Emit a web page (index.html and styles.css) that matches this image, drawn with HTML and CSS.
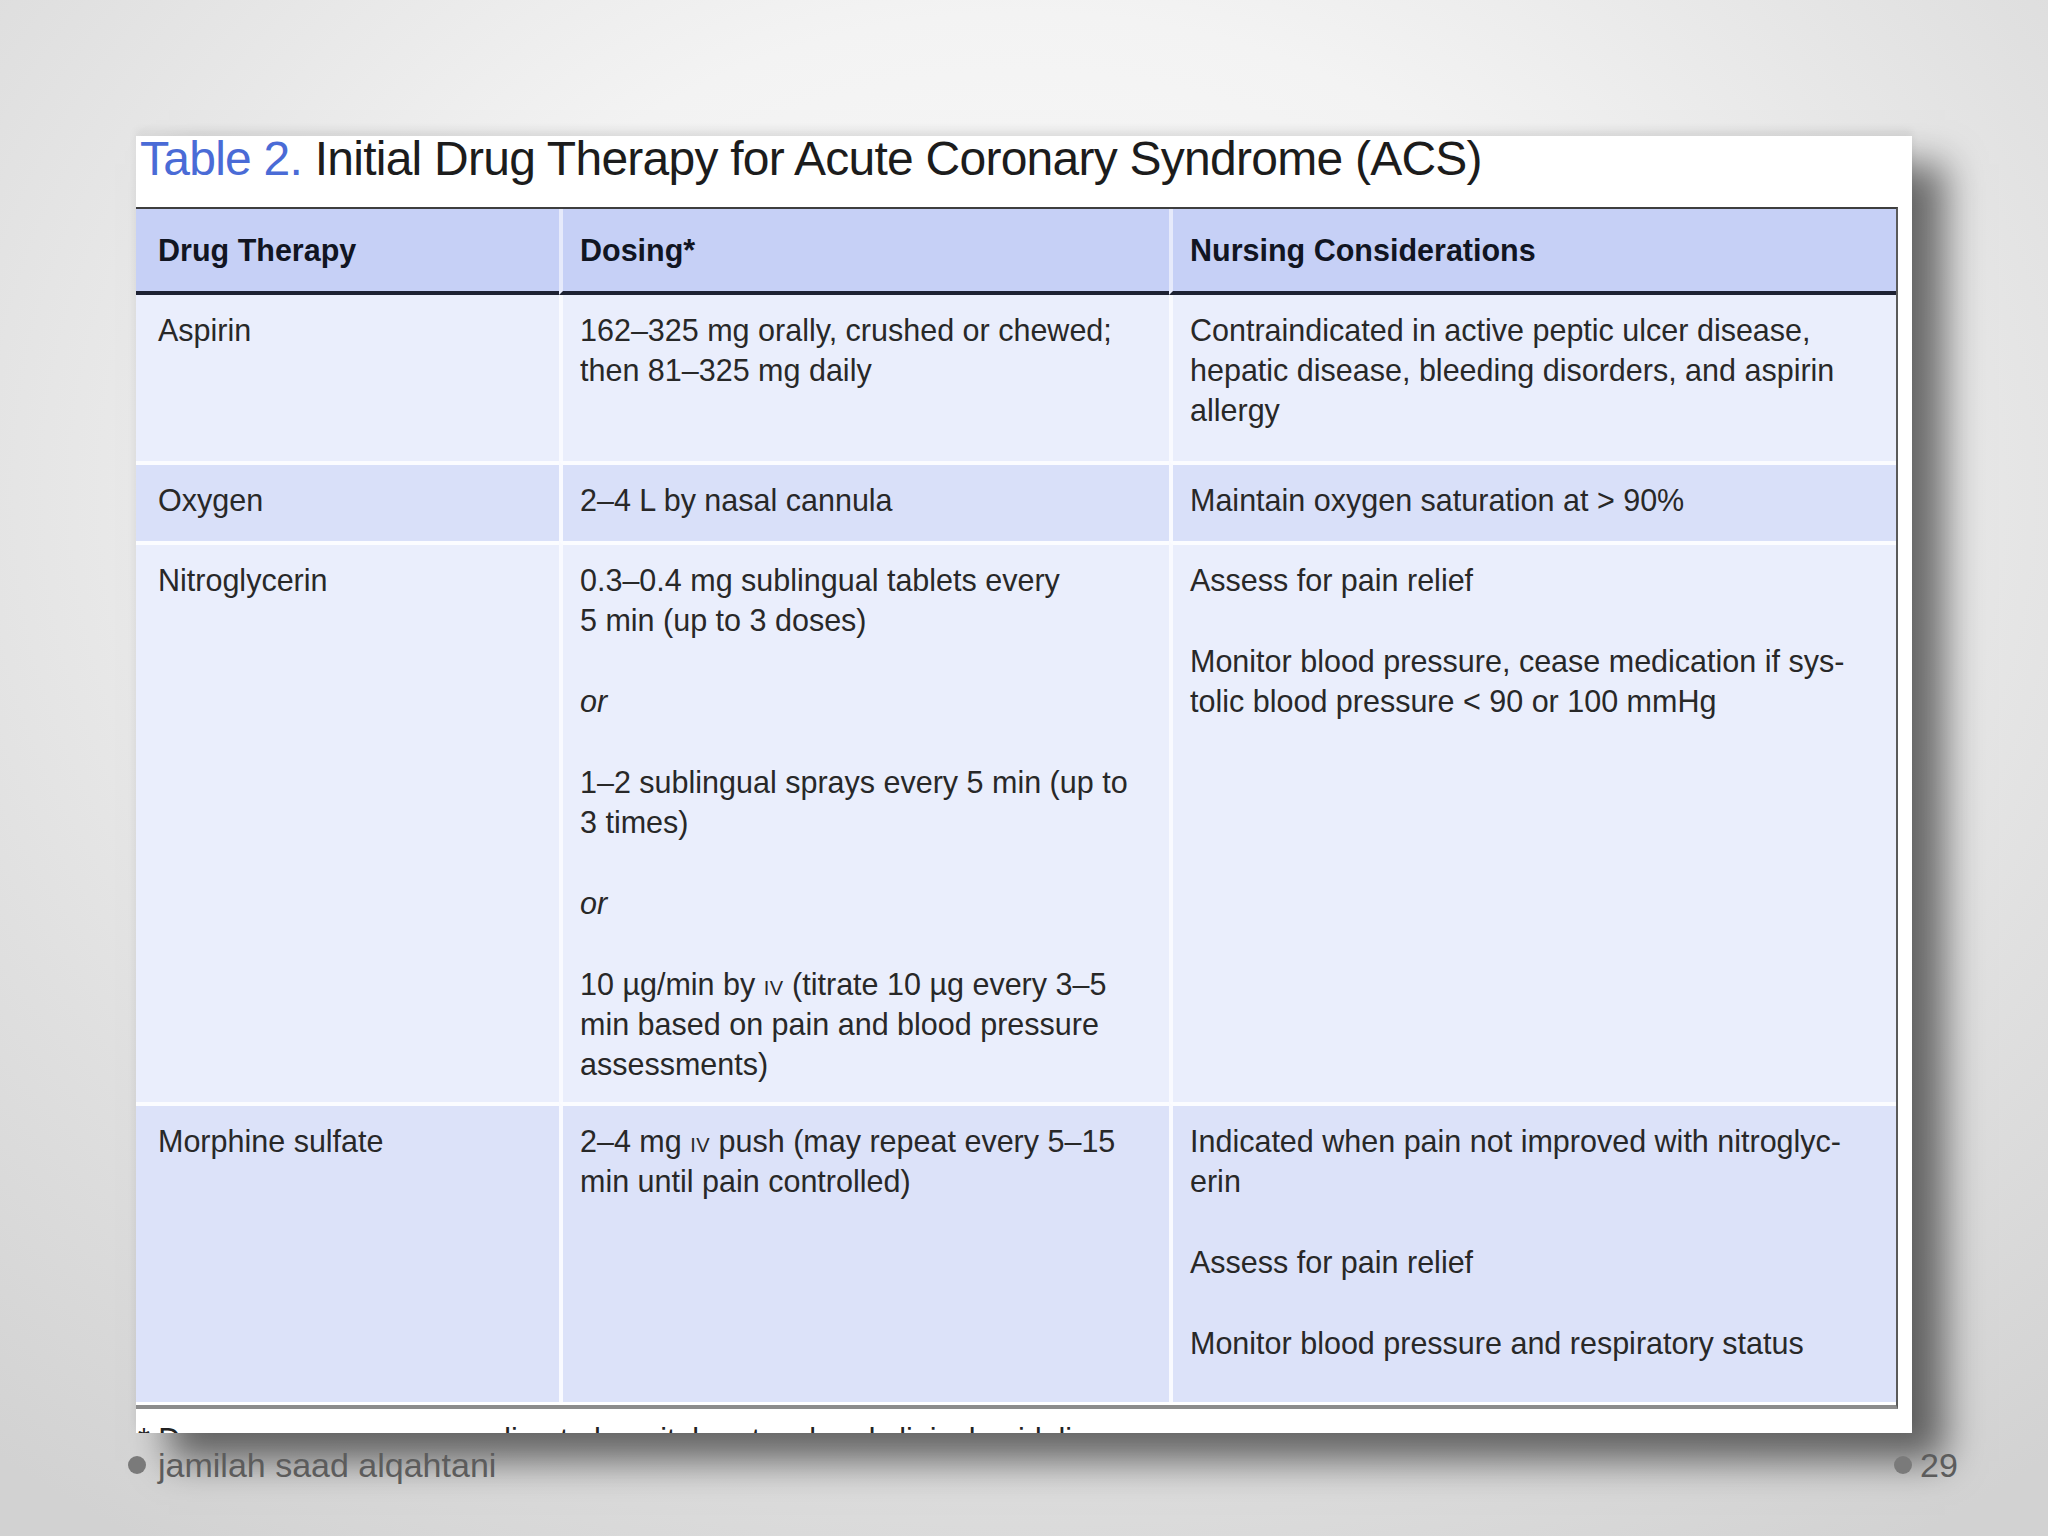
FILE: index.html
```html
<!DOCTYPE html>
<html lang="en">
<head>
<meta charset="utf-8">
<title>Table 2. Initial Drug Therapy for Acute Coronary Syndrome (ACS)</title>
<link rel="stylesheet" href="styles.css">
</head>
<body>
<div class="slide">
  <div class="card">
    <h1 class="title"><span class="tnum">Table 2.</span> Initial Drug Therapy for Acute Coronary Syndrome (ACS)</h1>
    <div class="tbl">
      <div class="cell th c1">Drug Therapy</div>
      <div class="cell th c2">Dosing*</div>
      <div class="cell th c3">Nursing Considerations</div>

      <div class="cell lt c1 first">Aspirin</div>
      <div class="cell lt c2 first"><p>162–325 mg orally, crushed or chewed;<br>then 81–325 mg daily</p></div>
      <div class="cell lt c3 first"><p>Contraindicated in active peptic ulcer disease,<br>hepatic disease, bleeding disorders, and aspirin<br>allergy</p></div>

      <div class="cell dk c1">Oxygen</div>
      <div class="cell dk c2"><p>2–4 L by nasal cannula</p></div>
      <div class="cell dk c3"><p>Maintain oxygen saturation at &gt; 90%</p></div>

      <div class="cell lt c1">Nitroglycerin</div>
      <div class="cell lt c2">
        <p>0.3–0.4 mg sublingual tablets every<br>5 min (up to 3 doses)</p>
        <p><em>or</em></p>
        <p>1–2 sublingual sprays every 5 min (up to<br>3 times)</p>
        <p><em>or</em></p>
        <p>10 µg/min by <span class="sc">IV</span> (titrate 10 µg every 3–5<br>min based on pain and blood pressure<br>assessments)</p>
      </div>
      <div class="cell lt c3">
        <p>Assess for pain relief</p>
        <p>Monitor blood pressure, cease medication if sys-<br>tolic blood pressure &lt; 90 or 100 mmHg</p>
      </div>

      <div class="cell dk2 c1">Morphine sulfate</div>
      <div class="cell dk2 c2"><p>2–4 mg <span class="sc">IV</span> push (may repeat every 5–15<br>min until pain controlled)</p></div>
      <div class="cell dk2 c3">
        <p>Indicated when pain not improved with nitroglyc-<br>erin</p>
        <p>Assess for pain relief</p>
        <p>Monitor blood pressure and respiratory status</p>
      </div>
    </div>
    <div class="foot-clip">
      <p class="foot">* Dosages may vary according to hospital protocol and clinical guidelines</p>
    </div>
  </div>

  <div class="footer footer-left"><span class="dot"></span><span>jamilah saad alqahtani</span></div>
  <div class="footer footer-right"><span class="dot dot-r"></span><span>29</span></div>
</div>
</body>
</html>
```

FILE: styles.css
```css
* { box-sizing: border-box; }

html, body {
  margin: 0;
  padding: 0;
}

body {
  width: 2048px;
  height: 1536px;
  overflow: hidden;
  font-family: "Liberation Sans", Arial, sans-serif;
  background: radial-gradient(ellipse 78% 82% at 50% 32%, #fbfbfb 0%, #f3f3f3 38%, #e0e0e0 72%, #d2d2d2 100%);
}

.slide {
  position: relative;
  width: 2048px;
  height: 1536px;
  padding: 136px 0 0 136px;
}

.card {
  width: 1776px;
  height: 1297px;
  background: #ffffff;
  box-shadow:
    33px 28px 36px 0 rgba(0, 0, 0, 0.55),
    0 -6px 8px 0 rgba(0, 0, 0, 0.06);
}

.title {
  margin: 0;
  padding-left: 4px;
  height: 46px;
  font-size: 48px;
  line-height: 46px;
  font-weight: normal;
  letter-spacing: -0.75px;
  color: #1c1c1c;
  white-space: nowrap;
}

.tnum {
  color: #4a6bd6;
}

.tbl {
  margin-top: 25px;
  width: 1762px;
  display: grid;
  grid-template-columns: 423px 610px 727px;
  grid-template-rows: 86px 166px 80px 561px 300px;
  border-top: 2px solid #3e3e3e;
  border-right: 2px solid #5a5a5a;
  border-bottom: 4px solid #8c8c8c;
  padding-bottom: 3px;
  background: #ffffff;
}

.cell {
  padding: 15px 10px 0 17px;
  font-size: 30.5px;
  line-height: 40px;
  color: #282828;
  white-space: nowrap;
  border-top: 4px solid #fbfcff;
}

.cell.c1 { padding-left: 22px; }
.cell.c2, .cell.c3 { border-left: 4px solid #f9faff; }

.cell p { margin: 0; }
.cell p + p { margin-top: 41px; }
.cell em { font-style: italic; }

.sc {
  font-size: 20px;
  line-height: 1;
  letter-spacing: 0.5px;
}

.th {
  display: flex;
  align-items: center;
  padding-top: 0;
  border-top: 0;
  border-bottom: 4px solid #1d2133;
  background: #c6d0f6;
  font-weight: bold;
  color: #111522;
}

.th.c2, .th.c3 { border-left-color: #e6eafb; }

.first { border-top: 0; }

.lt { background: #eaeefc; }
.dk { background: #d9e0f9; }
.dk2 { background: #dce2f9; }

.foot-clip {
  height: 24px;
  overflow: hidden;
}

.foot {
  margin: 10px 0 0 0;
  padding-left: 2px;
  font-size: 30.5px;
  line-height: 40px;
  color: #222;
  white-space: nowrap;
}

.footer {
  position: absolute;
  top: 1445px;
  height: 40px;
  display: flex;
  align-items: center;
  font-size: 34px;
  line-height: 40px;
  color: #5c5c5c;
  white-space: nowrap;
}

.footer-left { left: 128px; }
.footer-right { left: 1894px; }

.dot {
  width: 18px;
  height: 18px;
  border-radius: 50%;
  background: #7a7a7a;
  margin-right: 12px;
  flex: none;
}

.dot-r { margin-right: 8px; }
```
